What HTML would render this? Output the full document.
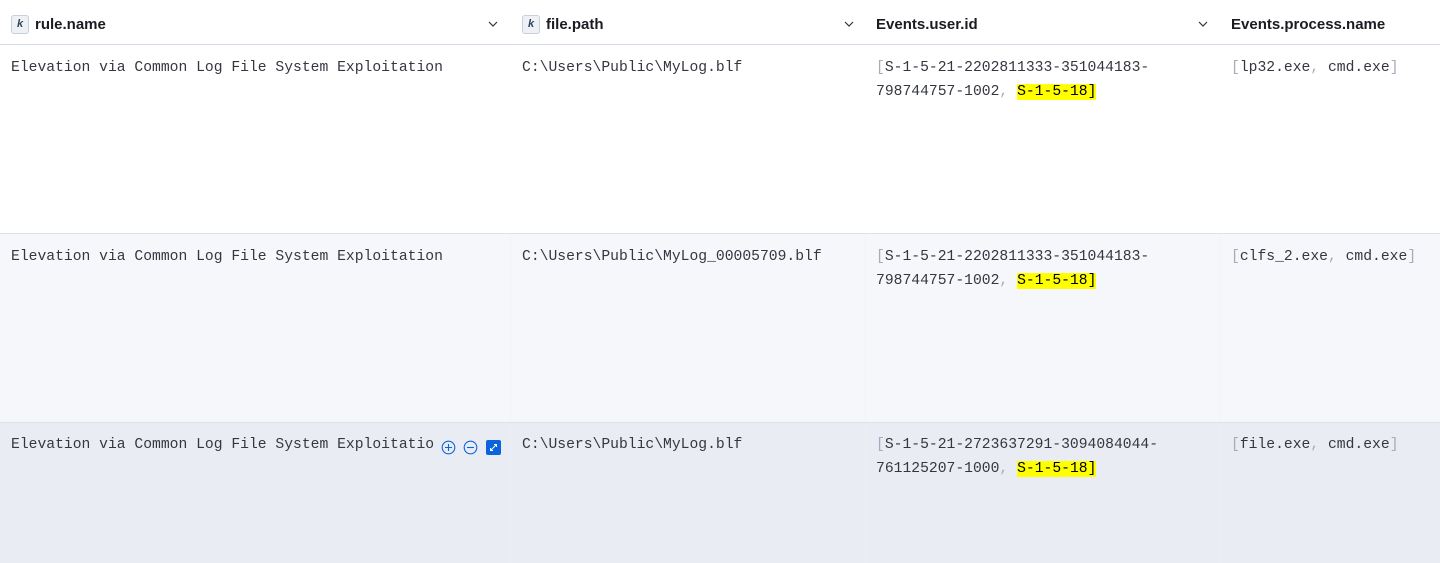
<!DOCTYPE html><html><head><style>
body{margin:0;width:1440px;height:563px;overflow:hidden;background:#fff;font-family:"Liberation Sans",sans-serif;}
.hdr{position:absolute;top:0;left:0;width:1440px;height:44px;border-bottom:1px solid #d3dae6;background:#fff}
.h{position:absolute;top:16px;font-weight:bold;font-size:15px;color:#1a1c21}
.k{position:absolute;top:15px;width:16px;height:17px;border:1px solid #c6d0de;border-radius:3px;background:#eef2f7;font-style:italic;font-size:11px;color:#345;text-align:center;line-height:16px;font-weight:bold}
.chev{position:absolute;top:20px;width:10px;height:8px}
.row{position:absolute;left:0;width:1440px;border-bottom:1px solid #dde3ec}
.c{position:absolute;font-family:"Liberation Mono",monospace;font-size:14.7px;color:#343741;line-height:24px}
.hl{background:#ff0;color:#000}
.g{color:#aab}
.sep{position:absolute;top:0;bottom:0;width:1px;background:#f1f3f7}
</style></head><body>
<div class="hdr">
<div class="k" style="left:11px">k</div><div class="h" style="left:35px">rule.name</div>
<svg class="chev" style="left:488px" viewBox="0 0 10 8"><path d="M1 2l4 4 4-4" fill="none" stroke="#333" stroke-width="1.2"/></svg>
<div class="k" style="left:522px">k</div><div class="h" style="left:546px">file.path</div>
<svg class="chev" style="left:844px" viewBox="0 0 10 8"><path d="M1 2l4 4 4-4" fill="none" stroke="#333" stroke-width="1.2"/></svg>
<div class="h" style="left:876px">Events.user.id</div>
<svg class="chev" style="left:1198px" viewBox="0 0 10 8"><path d="M1 2l4 4 4-4" fill="none" stroke="#333" stroke-width="1.2"/></svg>
<div class="h" style="left:1231px">Events.process.name</div>
</div>
<div class="row" style="top:45px;height:188px;background:#fff">
<div class="c" style="left:11px;top:11px">Elevation via Common Log File System Exploitation</div>
<div class="c" style="left:522px;top:11px">C:\Users\Public\MyLog.blf</div>
<div class="c" style="left:876px;top:11px"><span class="g">[</span>S-1-5-21-2202811333-351044183-<br>798744757-1002<span class="g">,</span> <span class="hl">S-1-5-18]</span></div>
<div class="c" style="left:1231px;top:11px"><span class="g">[</span>lp32.exe<span class="g">,</span> cmd.exe<span class="g">]</span></div>
</div>
<div class="row" style="top:234px;height:188px;background:#f5f7fa">
<div class="sep" style="left:510px"></div><div class="sep" style="left:865px"></div><div class="sep" style="left:1220px"></div>
<div class="c" style="left:11px;top:11px">Elevation via Common Log File System Exploitation</div>
<div class="c" style="left:522px;top:11px">C:\Users\Public\MyLog_00005709.blf</div>
<div class="c" style="left:876px;top:11px"><span class="g">[</span>S-1-5-21-2202811333-351044183-<br>798744757-1002<span class="g">,</span> <span class="hl">S-1-5-18]</span></div>
<div class="c" style="left:1231px;top:11px"><span class="g">[</span>clfs_2.exe<span class="g">,</span> cmd.exe<span class="g">]</span></div>
</div>
<div class="row" style="top:423px;height:140px;background:#e9edf3;border:0">
<div class="sep" style="left:510px;background:#eceff4"></div><div class="sep" style="left:865px;background:#eceff4"></div><div class="sep" style="left:1220px;background:#eceff4"></div>
<div class="c" style="left:11px;top:10px">Elevation via Common Log File System Exploitatio</div>
<svg style="position:absolute;left:441px;top:17px" width="15" height="15" viewBox="0 0 15 15"><circle cx="7.5" cy="7.5" r="6.3" fill="none" stroke="#0b64dd" stroke-width="1.1"/><path d="M4 7.5h7M7.5 4v7" stroke="#0b64dd" stroke-width="1.1"/></svg>
<svg style="position:absolute;left:463px;top:17px" width="15" height="15" viewBox="0 0 15 15"><circle cx="7.5" cy="7.5" r="6.3" fill="none" stroke="#0b64dd" stroke-width="1.1"/><path d="M4 7.5h7" stroke="#0b64dd" stroke-width="1.1"/></svg>
<svg style="position:absolute;left:486px;top:17px" width="15" height="15" viewBox="0 0 15 15"><rect width="15" height="15" rx="2" fill="#0b64dd"/><path d="M4.5 10.5l6-6M8 4.5h2.5V7M4.5 8v2.5H7" fill="none" stroke="#fff" stroke-width="1"/></svg>
<div class="c" style="left:522px;top:10px">C:\Users\Public\MyLog.blf</div>
<div class="c" style="left:876px;top:10px"><span class="g">[</span>S-1-5-21-2723637291-3094084044-<br>761125207-1000<span class="g">,</span> <span class="hl">S-1-5-18]</span></div>
<div class="c" style="left:1231px;top:10px"><span class="g">[</span>file.exe<span class="g">,</span> cmd.exe<span class="g">]</span></div>
</div>
</body></html>
